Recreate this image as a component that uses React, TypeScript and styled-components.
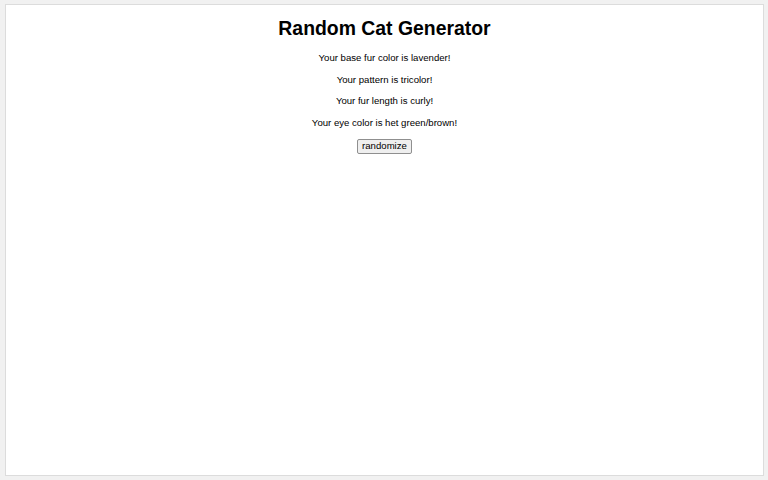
import { useState } from "react";
import styled, { createGlobalStyle } from "styled-components";

const GlobalStyle = createGlobalStyle`
  html, body {
    margin: 0;
    padding: 0;
    background: #f1f1f1;
    font-family: "Liberation Sans", Arial, sans-serif;
  }
`;

const furColors = ["lavender", "black", "white", "orange", "grey", "cream"];
const patterns = ["tricolor", "tabby", "solid", "tuxedo", "calico", "pointed"];
const lengths = ["curly", "short", "long", "hairless", "medium"];
const eyeColors = ["het green/brown", "green", "blue", "amber", "copper"];

const pick = (list: string[]) => list[Math.floor(Math.random() * list.length)];

const App = () => {
  const [cat, setCat] = useState({
    fur: "lavender",
    pattern: "tricolor",
    length: "curly",
    eyes: "het green/brown",
  });

  const randomize = () => {
    setCat({
      fur: pick(furColors),
      pattern: pick(patterns),
      length: pick(lengths),
      eyes: pick(eyeColors),
    });
  };

  return (
    <>
      <GlobalStyle />
      <Page>
        <Card>
          <Title>Random Cat Generator</Title>
          <Line>Your base fur color is {cat.fur}!</Line>
          <Line>Your pattern is {cat.pattern}!</Line>
          <Line>Your fur length is {cat.length}!</Line>
          <Line>Your eye color is {cat.eyes}!</Line>
          <Button onClick={randomize}>randomize</Button>
        </Card>
      </Page>
    </>
  );
};

const Page = styled.div`
  height: 480px;
  box-sizing: border-box;
  padding: 4px 4px 4px 5px;
  display: flex;
`;

const Card = styled.div`
  flex: 1;
  background: #ffffff;
  border: 1px solid #dcdcdc;
  display: flex;
  flex-direction: column;
  align-items: center;
  padding-top: 12px;
`;

const Title = styled.h1`
  margin: 0 0 13px;
  font-size: 19.4px;
  line-height: 22px;
  font-weight: bold;
  color: #000;
`;

const Line = styled.p`
  margin: 0 0 9.7px;
  font-size: 9.6px;
  line-height: 12px;
  color: #000;
`;

const Button = styled.button`
  height: 15px;
  padding: 0 4px;
  font-family: "Liberation Sans", Arial, sans-serif;
  font-size: 9.6px;
  line-height: 12px;
  color: #000;
  background: #efefef;
  border: 1px solid #8f8f8f;
  border-radius: 2px;
`;

export default App;
